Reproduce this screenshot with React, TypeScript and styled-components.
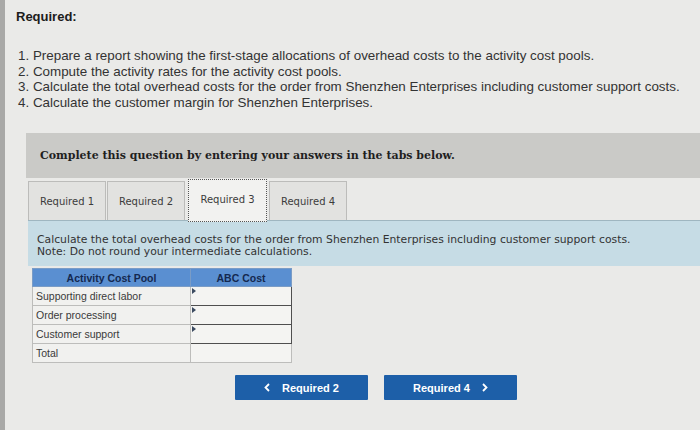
import React from 'react'
import styled, { createGlobalStyle } from 'styled-components'

const GlobalStyle = createGlobalStyle`
  html, body {
    margin: 0;
    padding: 0;
    background: #e9e9e7;
  }
  #root {
    width: 700px;
    height: 430px;
    overflow: hidden;
  }
`

const Page = styled.div`
  box-sizing: border-box;
  width: 700px;
  height: 430px;
  border-left: 5px solid #a9a9a7;
  background: #eaeae8;
  padding-top: 9px;
  font-family: 'Liberation Sans', Arial, sans-serif;
  color: #2a2a2a;
`

const Heading = styled.div`
  margin-left: 11px;
  font-size: 13px;
  font-weight: bold;
  line-height: 16px;
  color: #1c1c1c;
`

const TaskList = styled.ol`
  list-style: none;
  margin: 23px 0 0 13px;
  padding: 0;
  font-family: 'Liberation Sans', Arial, sans-serif;
  font-size: 13.4px;
  line-height: 15.6px;
  color: #333;
`

const Band = styled.div`
  margin: 23px 0 0 21px;
  height: 45px;
  background: #cacac7;
  display: flex;
  align-items: center;
  padding-left: 14px;
  font-family: 'DejaVu Serif', Georgia, serif;
  font-size: 11px;
  font-weight: bold;
  color: #1f1f1f;
`

const Tabs = styled.div`
  display: flex;
  align-items: flex-end;
  gap: 1px;
  margin: 3px 0 0 23px;
  height: 39px;
`

const Tab = styled.div<{ $active?: boolean }>`
  box-sizing: border-box;
  width: ${(p) => (p.$active ? '79px' : '78px')};
  height: ${(p) => (p.$active ? '43px' : '39px')};
  margin-bottom: ${(p) => (p.$active ? '-2px' : '0')};
  margin-left: ${(p) => (p.$active ? '2px' : '0')};
  margin-right: ${(p) => (p.$active ? '1px' : '0')};
  display: flex;
  align-items: center;
  justify-content: center;
  padding-bottom: ${(p) => (p.$active ? '2px' : '0')};
  background: ${(p) => (p.$active ? '#f2f2f0' : '#e2e2e0')};
  border: ${(p) => (p.$active ? '1px dotted #555' : '1px solid #bcbcba')};
  border-bottom: ${(p) => (p.$active ? '1px dotted #555' : 'none')};
  font-family: 'DejaVu Sans', Verdana, sans-serif;
  font-size: 10px;
  color: #3c3c3c;
  position: relative;
  z-index: ${(p) => (p.$active ? 1 : 0)};
`

const Panel = styled.div`
  margin-left: 23px;
  height: 46px;
  box-sizing: border-box;
  background: #c6dce5;
  border-top: 1px solid #9fb6c0;
  padding: 13px 0 0 9px;
  font-family: 'DejaVu Sans', Verdana, sans-serif;
  font-size: 10.8px;
  line-height: 11.5px;
  color: #333;
`

const Table = styled.table`
  margin: 2px 0 0 27px;
  border-collapse: collapse;
  font-family: 'Liberation Sans', Arial, sans-serif;
  font-size: 10.5px;
`

const HeadCell = styled.th<{ $w: number }>`
  width: ${(p) => p.$w}px;
  height: 17px;
  padding: 0;
  background: #5a8fd1;
  border: 1px solid #7a9cc6;
  color: #14284f;
  font-weight: bold;
  font-size: 10.5px;
  text-align: center;
`

const LabelCell = styled.td`
  height: 18px;
  padding: 0 3px;
  background: #f1f1ef;
  border: 1px solid #bdbdbb;
  color: #3a3a3a;
`

const InputCell = styled.td<{ $input?: boolean }>`
  position: relative;
  padding: 0;
  background: #f4f4f2;
  border: ${(p) => (p.$input ? '1.5px solid #4f4f4f' : '1px solid #bdbdbb')};
  &::before {
    content: '';
    display: ${(p) => (p.$input ? 'block' : 'none')};
    position: absolute;
    left: 1px;
    top: 1px;
    border-left: 4px solid #3b4a60;
    border-top: 3px solid transparent;
    border-bottom: 3px solid transparent;
  }
`

const NavRow = styled.div`
  display: flex;
  gap: 16px;
  margin: 12px 0 0 230px;
`

const NavButton = styled.div`
  box-sizing: border-box;
  width: 133px;
  height: 25px;
  display: flex;
  align-items: center;
  justify-content: center;
  gap: 12px;
  background: #1d5fa8;
  border-radius: 1px;
  color: #fff;
  font-family: 'Liberation Sans', Arial, sans-serif;
  font-weight: bold;
  font-size: 11px;
`

const Chevron = ({ dir }: { dir: 'left' | 'right' }) => (
  <svg width="6" height="9" viewBox="0 0 6 9">
    <path
      d={dir === 'left' ? 'M5 1 L1.5 4.5 L5 8' : 'M1 1 L4.5 4.5 L1 8'}
      fill="none"
      stroke="#fff"
      strokeWidth="1.8"
    />
  </svg>
)

const tasks = [
  '1. Prepare a report showing the first-stage allocations of overhead costs to the activity cost pools.',
  '2. Compute the activity rates for the activity cost pools.',
  '3. Calculate the total overhead costs for the order from Shenzhen Enterprises including customer support costs.',
  '4. Calculate the customer margin for Shenzhen Enterprises.',
]

const pools = ['Supporting direct labor', 'Order processing', 'Customer support']

export default function App() {
  return (
    <>
      <GlobalStyle />
      <Page>
        <Heading>Required:</Heading>
        <TaskList>
          {tasks.map((t) => (
            <li key={t}>{t}</li>
          ))}
        </TaskList>
        <Band>Complete this question by entering your answers in the tabs below.</Band>
        <Tabs>
          <Tab>Required 1</Tab>
          <Tab>Required 2</Tab>
          <Tab $active>Required 3</Tab>
          <Tab>Required 4</Tab>
        </Tabs>
        <Panel>
          Calculate the total overhead costs for the order from Shenzhen Enterprises including customer support costs.
          <br />
          Note: Do not round your intermediate calculations.
        </Panel>
        <Table>
          <thead>
            <tr>
              <HeadCell $w={157}>Activity Cost Pool</HeadCell>
              <HeadCell $w={100}>ABC Cost</HeadCell>
            </tr>
          </thead>
          <tbody>
            {pools.map((p) => (
              <tr key={p}>
                <LabelCell>{p}</LabelCell>
                <InputCell $input />
              </tr>
            ))}
            <tr>
              <LabelCell>Total</LabelCell>
              <InputCell />
            </tr>
          </tbody>
        </Table>
        <NavRow>
          <NavButton>
            <Chevron dir="left" />
            Required 2
          </NavButton>
          <NavButton>
            Required 4
            <Chevron dir="right" />
          </NavButton>
        </NavRow>
      </Page>
    </>
  )
}
